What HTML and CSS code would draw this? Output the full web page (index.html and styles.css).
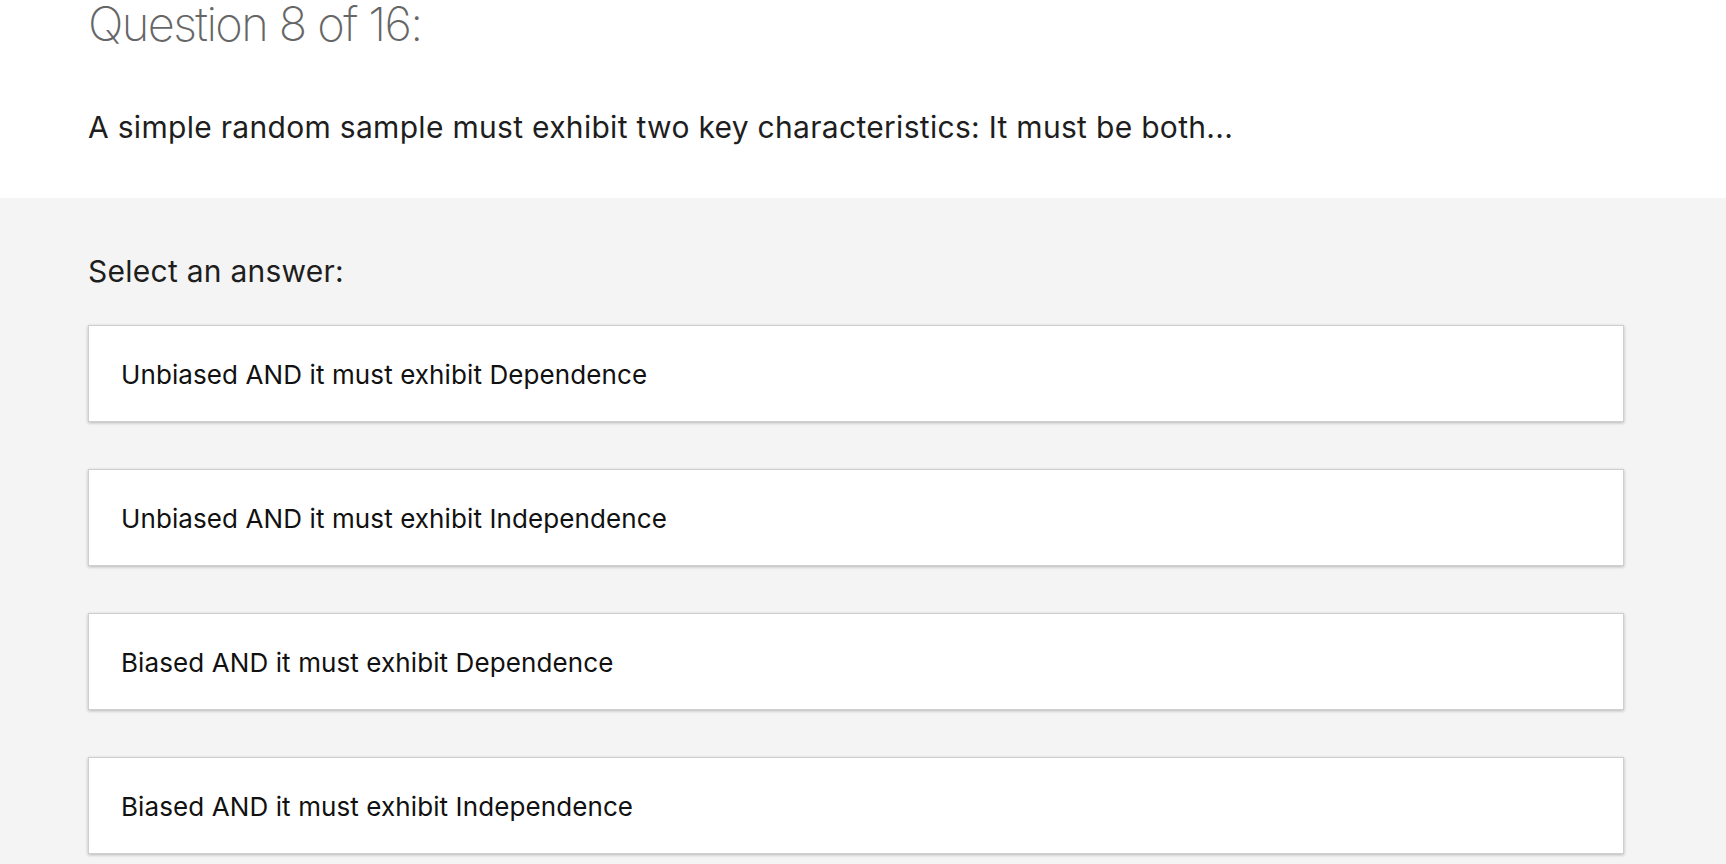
FILE: index.html
```html
<!DOCTYPE html>
<html>
<head>
<meta charset="utf-8">
<link rel="stylesheet" href="styles.css">
</head>
<body>
<header class="head">
  <h1 class="title">Question 8 of 16:</h1>
  <p class="question">A simple random sample must exhibit two key characteristics: It must be both...</p>
</header>
<main class="answers">
  <h2 class="prompt">Select an answer:</h2>
  <div class="options">
    <div class="option">Unbiased AND it must exhibit Dependence</div>
    <div class="option">Unbiased AND it must exhibit Independence</div>
    <div class="option">Biased AND it must exhibit Dependence</div>
    <div class="option">Biased AND it must exhibit Independence</div>
  </div>
</main>
</body>
</html>
```

FILE: styles.css
```css
html, body {
  margin: 0;
  padding: 0;
  background: #f4f4f4;
  font-family: Inter, Roboto, "Liberation Sans", sans-serif;
  overflow: hidden;
}
.head {
  background: #ffffff;
  padding: 0 88px 56px 88px;
}
.title {
  margin: 0;
  font-size: 47px;
  line-height: 47px;
  font-weight: 200;
  letter-spacing: -1.6px;
  color: #666666;
}
.question {
  margin: 65px 0 0 0;
  font-size: 30px;
  line-height: 30px;
  font-weight: 400;
  letter-spacing: 0.3px;
  color: #1e1e1e;
}
.answers {
  padding: 58px 102px 40px 88px;
}
.prompt {
  margin: 0 0 39px 0;
  font-size: 30px;
  line-height: 30px;
  font-weight: 400;
  letter-spacing: 0.25px;
  color: #1e1e1e;
}
.options {
  display: flex;
  flex-direction: column;
  gap: 47px;
}
.option {
  background: #ffffff;
  border: 1px solid #cfcfcf;
  box-shadow: 0 1px 3px rgba(0, 0, 0, 0.25);
  padding: 36px 32px 33px 32px;
  font-size: 26px;
  line-height: 26px;
  letter-spacing: 0.1px;
  color: #111111;
}
```
